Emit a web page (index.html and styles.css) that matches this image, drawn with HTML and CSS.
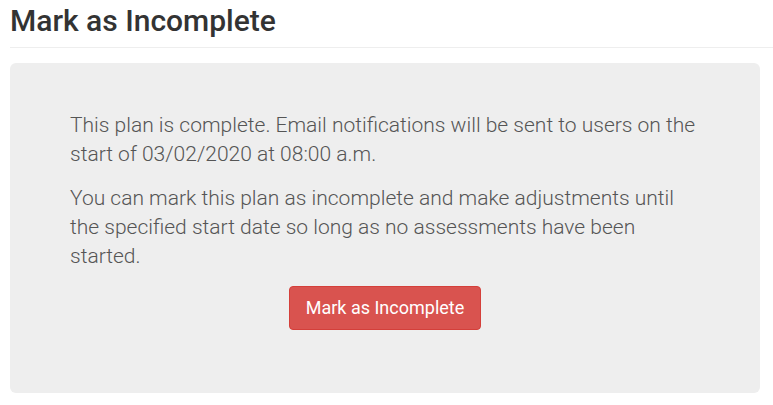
FILE: index.html
```html
<!DOCTYPE html>
<html>
<head>
<meta charset="utf-8">
<link rel="stylesheet" href="styles.css">
</head>
<body>
<div class="page">
  <h1 class="page-header">Mark as Incomplete</h1>
  <div class="jumbotron">
    <p>This plan is complete. Email notifications will be sent to users on the start of 03/02/2020 at 08:00 a.m.</p>
    <p>You can mark this plan as incomplete and make adjustments until the specified start date so long as no assessments have been started.</p>
    <div class="actions">
      <button class="btn-danger">Mark as Incomplete</button>
    </div>
  </div>
</div>
</body>
</html>
```
FILE: styles.css
```css
html, body {
  margin: 0;
  padding: 0;
  background: #fff;
}
body {
  font-family: Roboto, "Liberation Sans", sans-serif;
  color: #333;
}
.page {
  padding: 0 0 0 10px;
}
.page-header {
  margin: 0;
  padding: 4px 0 9px;
  font-size: 30px;
  font-weight: 500;
  line-height: 34px;
  color: #333;
  border-bottom: 1px solid #eee;
}
.jumbotron {
  margin-top: 15px;
  width: 750px;
  box-sizing: border-box;
  background: #eee;
  border-radius: 6px;
  padding: 48px 60px 48px 60px;
}
.jumbotron p {
  margin: 0 0 15px;
  font-size: 21px;
  line-height: 29px;
  color: #555;
  font-weight: 300;
}
.actions {
  display: flex;
  justify-content: center;
  padding-top: 0;
  margin-bottom: 15px;
}
.btn-danger {
  font-family: Roboto, "Liberation Sans", sans-serif;
  font-size: 18px;
  line-height: 24px;
  padding: 9px 16px;
  color: #fff;
  background: #d9534f;
  border: 1px solid #d43f3a;
  border-radius: 4px;
  white-space: nowrap;
}
```
